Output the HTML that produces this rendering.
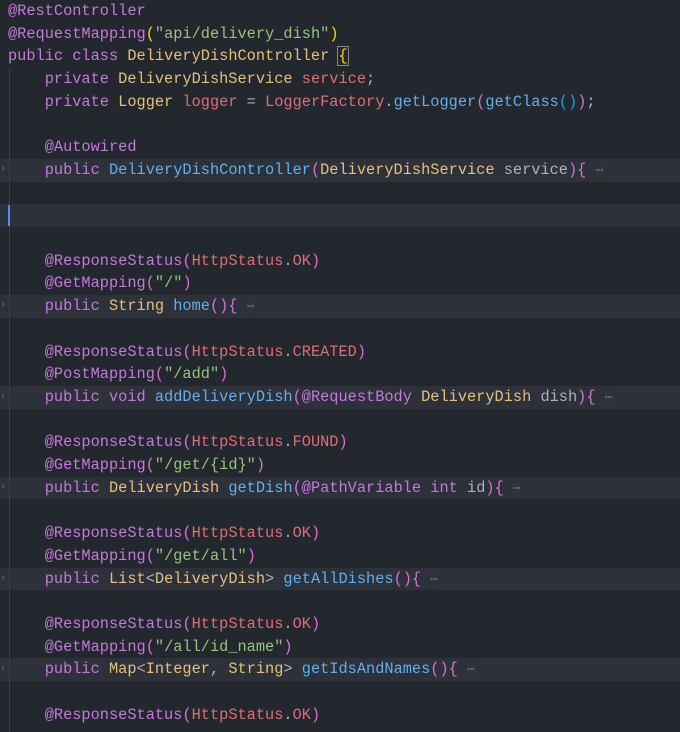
<!DOCTYPE html>
<html><head><meta charset="utf-8"><style>
html,body{margin:0;padding:0;background:#23272e;width:680px;height:732px;overflow:hidden}
.c{position:relative;font-family:"Liberation Mono",monospace;font-size:15.3px;color:#abb2bf}
.l{position:absolute;left:0;width:680px;height:22.7px;line-height:22.7px;white-space:pre;padding-left:8px;box-sizing:border-box}
.h{background:#2c313a}
.k{color:#c678dd}.t{color:#e5c07b}.s{color:#98c379}.f{color:#61afef}.r{color:#e06c75}
.y{color:#ffd700}.p{color:#da70d6}.b{color:#179fff}
.e{color:#6b717d;background:#2f333d;font-size:13px}
.g{position:absolute;left:9px;top:68px;width:1px;height:664px;background:#3b4048}
.a{position:absolute;left:0;color:#6b717d;font-size:10px}
.cur{position:absolute;left:8px;top:205px;width:2px;height:21px;background:#528bff}
.bx{outline:1px solid #888;}
</style></head><body><div class="c">
<div class="l" style="top:0"><span class="k">@RestController</span></div>
<div class="l" style="top:22.7px"><span class="k">@RequestMapping</span><span class="y">(</span><span class="s">"api/delivery_dish"</span><span class="y">)</span></div>
<div class="l" style="top:45.4px"><span class="k">public class </span><span class="t">DeliveryDishController</span> <span class="y bx">{</span></div>
<div class="l" style="top:68.1px">    <span class="k">private </span><span class="t">DeliveryDishService</span> <span class="r">service</span>;</div>
<div class="l" style="top:90.8px">    <span class="k">private </span><span class="t">Logger</span> <span class="r">logger</span> = <span class="r">LoggerFactory</span>.<span class="f">getLogger</span><span class="p">(</span><span class="f">getClass</span><span class="b">()</span><span class="p">)</span>;</div>
<div class="l" style="top:136.2px">    <span class="k">@Autowired</span></div>
<div class="l h" style="top:158.9px">    <span class="k">public </span><span class="f">DeliveryDishController</span><span class="p">(</span><span class="t">DeliveryDishService</span> service<span class="p">){</span> <span class="e">⋯</span></div>
<div class="l h" style="top:204.3px"></div>
<div class="l" style="top:249.7px">    <span class="k">@ResponseStatus</span><span class="p">(</span><span class="r">HttpStatus</span>.<span class="r">OK</span><span class="p">)</span></div>
<div class="l" style="top:272.4px">    <span class="k">@GetMapping</span><span class="p">(</span><span class="s">"/"</span><span class="p">)</span></div>
<div class="l h" style="top:295.1px">    <span class="k">public </span><span class="t">String</span> <span class="f">home</span><span class="p">(){</span> <span class="e">⋯</span></div>
<div class="l" style="top:340.5px">    <span class="k">@ResponseStatus</span><span class="p">(</span><span class="r">HttpStatus</span>.<span class="r">CREATED</span><span class="p">)</span></div>
<div class="l" style="top:363.2px">    <span class="k">@PostMapping</span><span class="p">(</span><span class="s">"/add"</span><span class="p">)</span></div>
<div class="l h" style="top:385.9px">    <span class="k">public void </span><span class="f">addDeliveryDish</span><span class="p">(</span><span class="k">@RequestBody</span> <span class="t">DeliveryDish</span> dish<span class="p">){</span> <span class="e">⋯</span></div>
<div class="l" style="top:431.3px">    <span class="k">@ResponseStatus</span><span class="p">(</span><span class="r">HttpStatus</span>.<span class="r">FOUND</span><span class="p">)</span></div>
<div class="l" style="top:454px">    <span class="k">@GetMapping</span><span class="p">(</span><span class="s">"/get/{id}"</span><span class="p">)</span></div>
<div class="l h" style="top:476.7px">    <span class="k">public </span><span class="t">DeliveryDish</span> <span class="f">getDish</span><span class="p">(</span><span class="k">@PathVariable int</span> id<span class="p">){</span> <span class="e">⋯</span></div>
<div class="l" style="top:522.1px">    <span class="k">@ResponseStatus</span><span class="p">(</span><span class="r">HttpStatus</span>.<span class="r">OK</span><span class="p">)</span></div>
<div class="l" style="top:544.8px">    <span class="k">@GetMapping</span><span class="p">(</span><span class="s">"/get/all"</span><span class="p">)</span></div>
<div class="l h" style="top:567.5px">    <span class="k">public </span><span class="t">List</span>&lt;<span class="t">DeliveryDish</span>&gt; <span class="f">getAllDishes</span><span class="p">(){</span> <span class="e">⋯</span></div>
<div class="l" style="top:612.9px">    <span class="k">@ResponseStatus</span><span class="p">(</span><span class="r">HttpStatus</span>.<span class="r">OK</span><span class="p">)</span></div>
<div class="l" style="top:635.6px">    <span class="k">@GetMapping</span><span class="p">(</span><span class="s">"/all/id_name"</span><span class="p">)</span></div>
<div class="l h" style="top:658.3px">    <span class="k">public </span><span class="t">Map</span>&lt;<span class="t">Integer</span>, <span class="t">String</span>&gt; <span class="f">getIdsAndNames</span><span class="p">(){</span> <span class="e">⋯</span></div>
<div class="l" style="top:703.7px">    <span class="k">@ResponseStatus</span><span class="p">(</span><span class="r">HttpStatus</span>.<span class="r">OK</span><span class="p">)</span></div>
<div class="g"></div>
<div class="cur"></div>
<span class="a" style="top:164px">›</span><span class="a" style="top:300px">›</span><span class="a" style="top:391px">›</span><span class="a" style="top:482px">›</span><span class="a" style="top:573px">›</span><span class="a" style="top:663px">›</span>
</div></body></html>
